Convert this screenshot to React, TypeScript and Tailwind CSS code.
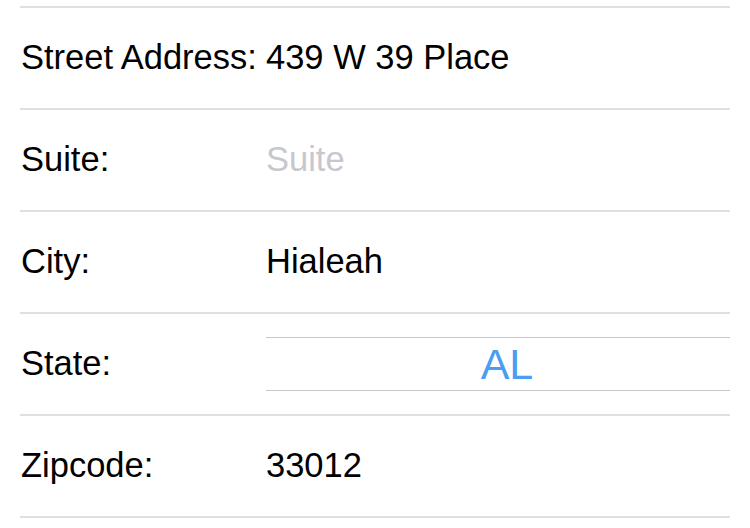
import React from "react"

type Row = {
  label: string
  value?: string
  placeholder?: string
  picker?: boolean
}

const ROWS: Row[] = [
  { label: "Street Address:", value: "439 W 39 Place" },
  { label: "Suite:", placeholder: "Suite" },
  { label: "City:", value: "Hialeah" },
  { label: "State:", value: "AL", picker: true },
  { label: "Zipcode:", value: "33012" },
]

function FormRow({ row }: { row: Row }) {
  return (
    <div className="flex h-[102px] items-center border-b-2 border-[#e0e0e0]">
      <div className="w-[246px] shrink-0 pl-px text-[34.5px] text-black">{row.label}</div>
      {row.picker ? (
        <div className="flex h-[54px] flex-1 items-center justify-center border-y border-[#c8c8c8] pl-[18px] text-[43px] text-[#4a9df2]">
          {row.value}
        </div>
      ) : row.value ? (
        <div className="flex-1 text-[34.5px] text-black">{row.value}</div>
      ) : (
        <div className="flex-1 text-[34.5px] text-[#c7c7cd]">{row.placeholder}</div>
      )}
    </div>
  )
}

export default function App() {
  return (
    <div
      className="h-[528px] w-[750px] overflow-hidden bg-white pt-[6px]"
      style={{ fontFamily: '"Liberation Sans", Arial, sans-serif' }}
    >
      <div className="mx-[20px] border-t-2 border-[#e0e0e0]">
        {ROWS.map((row) => (
          <FormRow key={row.label} row={row} />
        ))}
      </div>
    </div>
  )
}
